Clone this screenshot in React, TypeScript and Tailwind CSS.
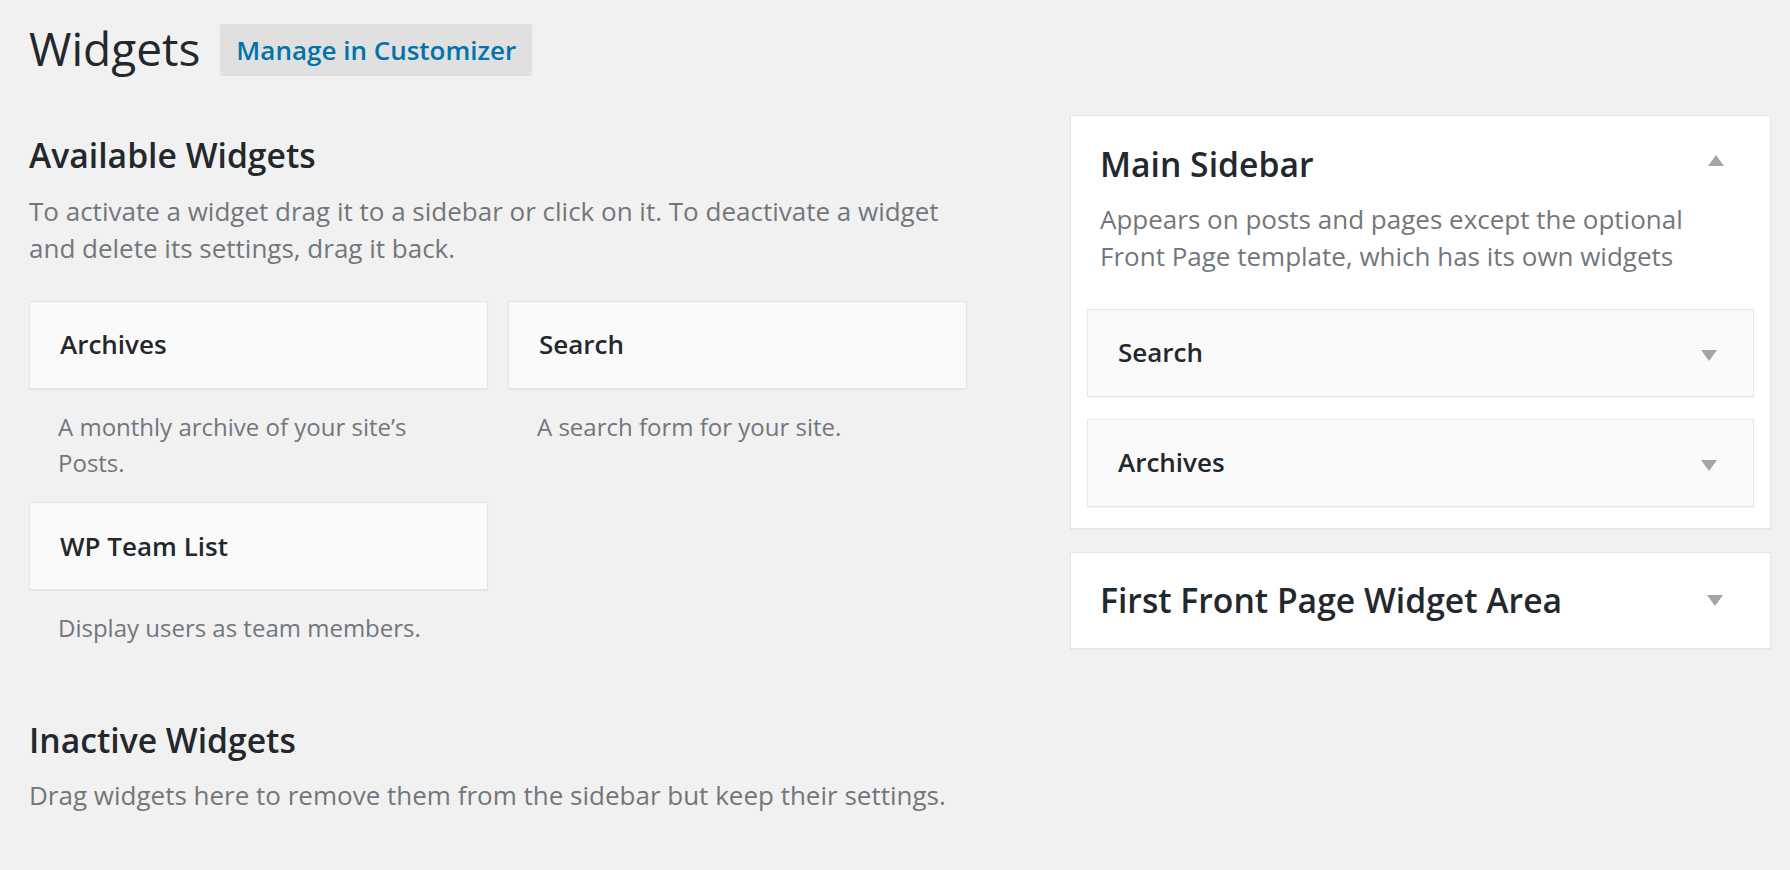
function Triangle({ up = false, className = "" }: { up?: boolean; className?: string }) {
  return (
    <svg width="16" height="11" viewBox="0 0 16 11" className={className}>
      <polygon points={up ? "8,0 16,11 0,11" : "0,0 16,0 8,11"} fill="#a0a5aa" />
    </svg>
  );
}

function WidgetTile({ title, description }: { title: string; description: string }) {
  return (
    <div>
      <div className="flex h-[88px] items-center border border-[#e5e5e5] bg-[#fafafa] pl-[30px] text-[26px] font-semibold text-[#23282d] shadow-[0_1px_1px_rgba(0,0,0,0.04)]">
        {title}
      </div>
      <p className="px-[29px] pt-[20px] pb-[20px] text-[24px] leading-[36.7px] text-[#72777c]">{description}</p>
    </div>
  );
}

function SidebarWidget({ title }: { title: string }) {
  return (
    <div className="flex h-[88px] items-center justify-between border border-[#e5e5e5] bg-[#fafafa] pr-[36px] pl-[30px] shadow-[0_1px_1px_rgba(0,0,0,0.04)]">
      <span className="text-[26px] font-semibold text-[#23282d]">{title}</span>
      <Triangle className="mt-[6px]" />
    </div>
  );
}

export default function App() {
  return (
    <div className="min-h-screen bg-[#f1f1f1] pl-[29px] font-['Open_Sans',sans-serif] text-[#23282d]">
      <header className="flex items-start pt-[18px]">
        <h1 className="text-[46px] leading-[60px] font-normal">Widgets</h1>
        <button className="mt-[6px] ml-[20px] h-[52px] rounded-[3px] bg-[#e0e0e0] px-[16px] text-[26px] leading-[52px] font-semibold text-[#0073aa]">
          Manage in Customizer
        </button>
      </header>

      <div className="flex gap-[103px]">
        <main className="w-[938px]">
          <h2 className="mt-[55px] text-[33.7px] leading-[44px] font-semibold">Available Widgets</h2>
          <p className="mt-[15.5px] text-[26px] leading-[37.6px] text-[#72777c]">
            To activate a widget drag it to a sidebar or click on it. To deactivate a widget and delete its settings, drag it back.
          </p>
          <div className="mt-[33px] grid grid-cols-2 gap-x-[20px]">
            <WidgetTile title="Archives" description="A monthly archive of your site’s Posts." />
            <WidgetTile title="Search" description="A search form for your site." />
            <WidgetTile title="WP Team List" description="Display users as team members." />
          </div>
          <h2 className="mt-[51px] text-[33.7px] leading-[44px] font-semibold">Inactive Widgets</h2>
          <p className="mt-[15.5px] text-[26px] leading-[37.6px] text-[#72777c]">
            Drag widgets here to remove them from the sidebar but keep their settings.
          </p>
        </main>

        <aside className="mt-[37px] w-[701px]">
          <section className="border border-[#e5e5e5] bg-white px-[16px] pb-[21px] shadow-[0_1px_1px_rgba(0,0,0,0.04)]">
            <div className="pt-[26px] pr-[30px] pl-[13px]">
              <div className="flex items-start justify-between">
                <h2 className="text-[33.7px] leading-[44px] font-semibold">Main Sidebar</h2>
                <Triangle up className="mt-[13px]" />
              </div>
              <p className="mt-[15px] text-[26px] leading-[37.4px] text-[#72777c]">
                Appears on posts and pages except the optional Front Page template, which has its own widgets
              </p>
            </div>
            <div className="mt-[33px] flex flex-col gap-[22px]">
              <SidebarWidget title="Search" />
              <SidebarWidget title="Archives" />
            </div>
          </section>

          <section className="mt-[23px] flex h-[97px] items-center justify-between border border-[#e5e5e5] bg-white pr-[47px] pl-[29px] shadow-[0_1px_1px_rgba(0,0,0,0.04)]">
            <h2 className="text-[33.7px] leading-[44px] font-semibold">First Front Page Widget Area</h2>
            <Triangle />
          </section>
        </aside>
      </div>
    </div>
  );
}
